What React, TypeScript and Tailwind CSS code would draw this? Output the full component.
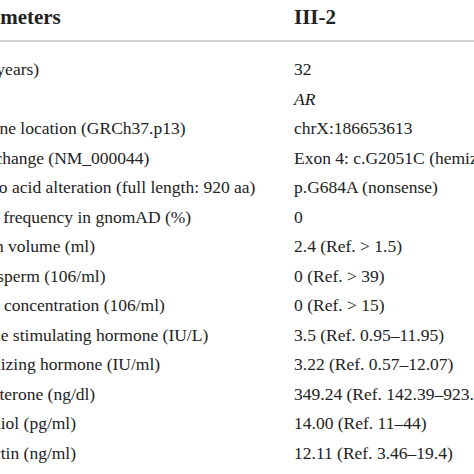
import React from "react";

type Row = { label: string; shift: string; value: string; italic?: boolean };

const rows: Row[] = [
  { label: "Age (years)", shift: "-ml-[43px]", value: "32" },
  { label: "MOI", shift: "-ml-[44px]", value: "AR", italic: true },
  { label: "Gene location (GRCh37.p13)", shift: "-ml-[21px]", value: "chrX:186653613" },
  { label: "Base change (NM_000044)", shift: "-ml-[44px]", value: "Exon 4: c.G2051C (hemizygous)" },
  { label: "Amino acid alteration (full length: 920 aa)", shift: "-ml-[41px]", value: "p.G684A (nonsense)" },
  { label: "Allele frequency in gnomAD (%)", shift: "-ml-[44px]", value: "0" },
  { label: "Semen volume (ml)", shift: "-ml-[44px]", value: "2.4 (Ref. > 1.5)" },
  { label: "Total sperm (106/ml)", shift: "-ml-[43px]", value: "0 (Ref. > 39)" },
  { label: "Sperm concentration (106/ml)", shift: "-ml-[46px]", value: "0 (Ref. > 15)" },
  { label: "Follicle stimulating hormone (IU/L)", shift: "-ml-[45px]", value: "3.5 (Ref. 0.95–11.95)" },
  { label: "Luteinizing hormone (IU/ml)", shift: "-ml-[45px]", value: "3.22 (Ref. 0.57–12.07)" },
  { label: "Testosterone (ng/dl)", shift: "-ml-[45px]", value: "349.24 (Ref. 142.39–923.14)" },
  { label: "Estradiol (pg/ml)", shift: "-ml-[44px]", value: "14.00 (Ref. 11–44)" },
  { label: "Prolactin (ng/ml)", shift: "-ml-[44px]", value: "12.11 (Ref. 3.46–19.4)" },
];

export default function App() {
  return (
    <div
      className="w-[474px] h-[474px] overflow-hidden bg-white text-[#222222]"
      style={{ fontFamily: '"Liberation Serif", "DejaVu Serif", serif' }}
    >
      <div className="flex h-[42px] pt-[2px] text-[21px] font-bold border-b-2 border-[#d2d2d2] whitespace-nowrap">
        <div className="w-[294px] shrink-0 overflow-hidden">
          <span className="block -ml-[43px]">Parameters</span>
        </div>
        <div className="shrink-0">III-2</div>
      </div>
      <div className="pt-[13px] text-[17.5px] leading-[29.5px]">
        {rows.map((r, i) => (
          <div key={i} className="flex whitespace-nowrap">
            <div className="w-[294px] shrink-0 overflow-hidden">
              <span className={"block " + r.shift}>{r.label}</span>
            </div>
            <div className={"shrink-0" + (r.italic ? " italic" : "")}>{r.value}</div>
          </div>
        ))}
      </div>
    </div>
  );
}
